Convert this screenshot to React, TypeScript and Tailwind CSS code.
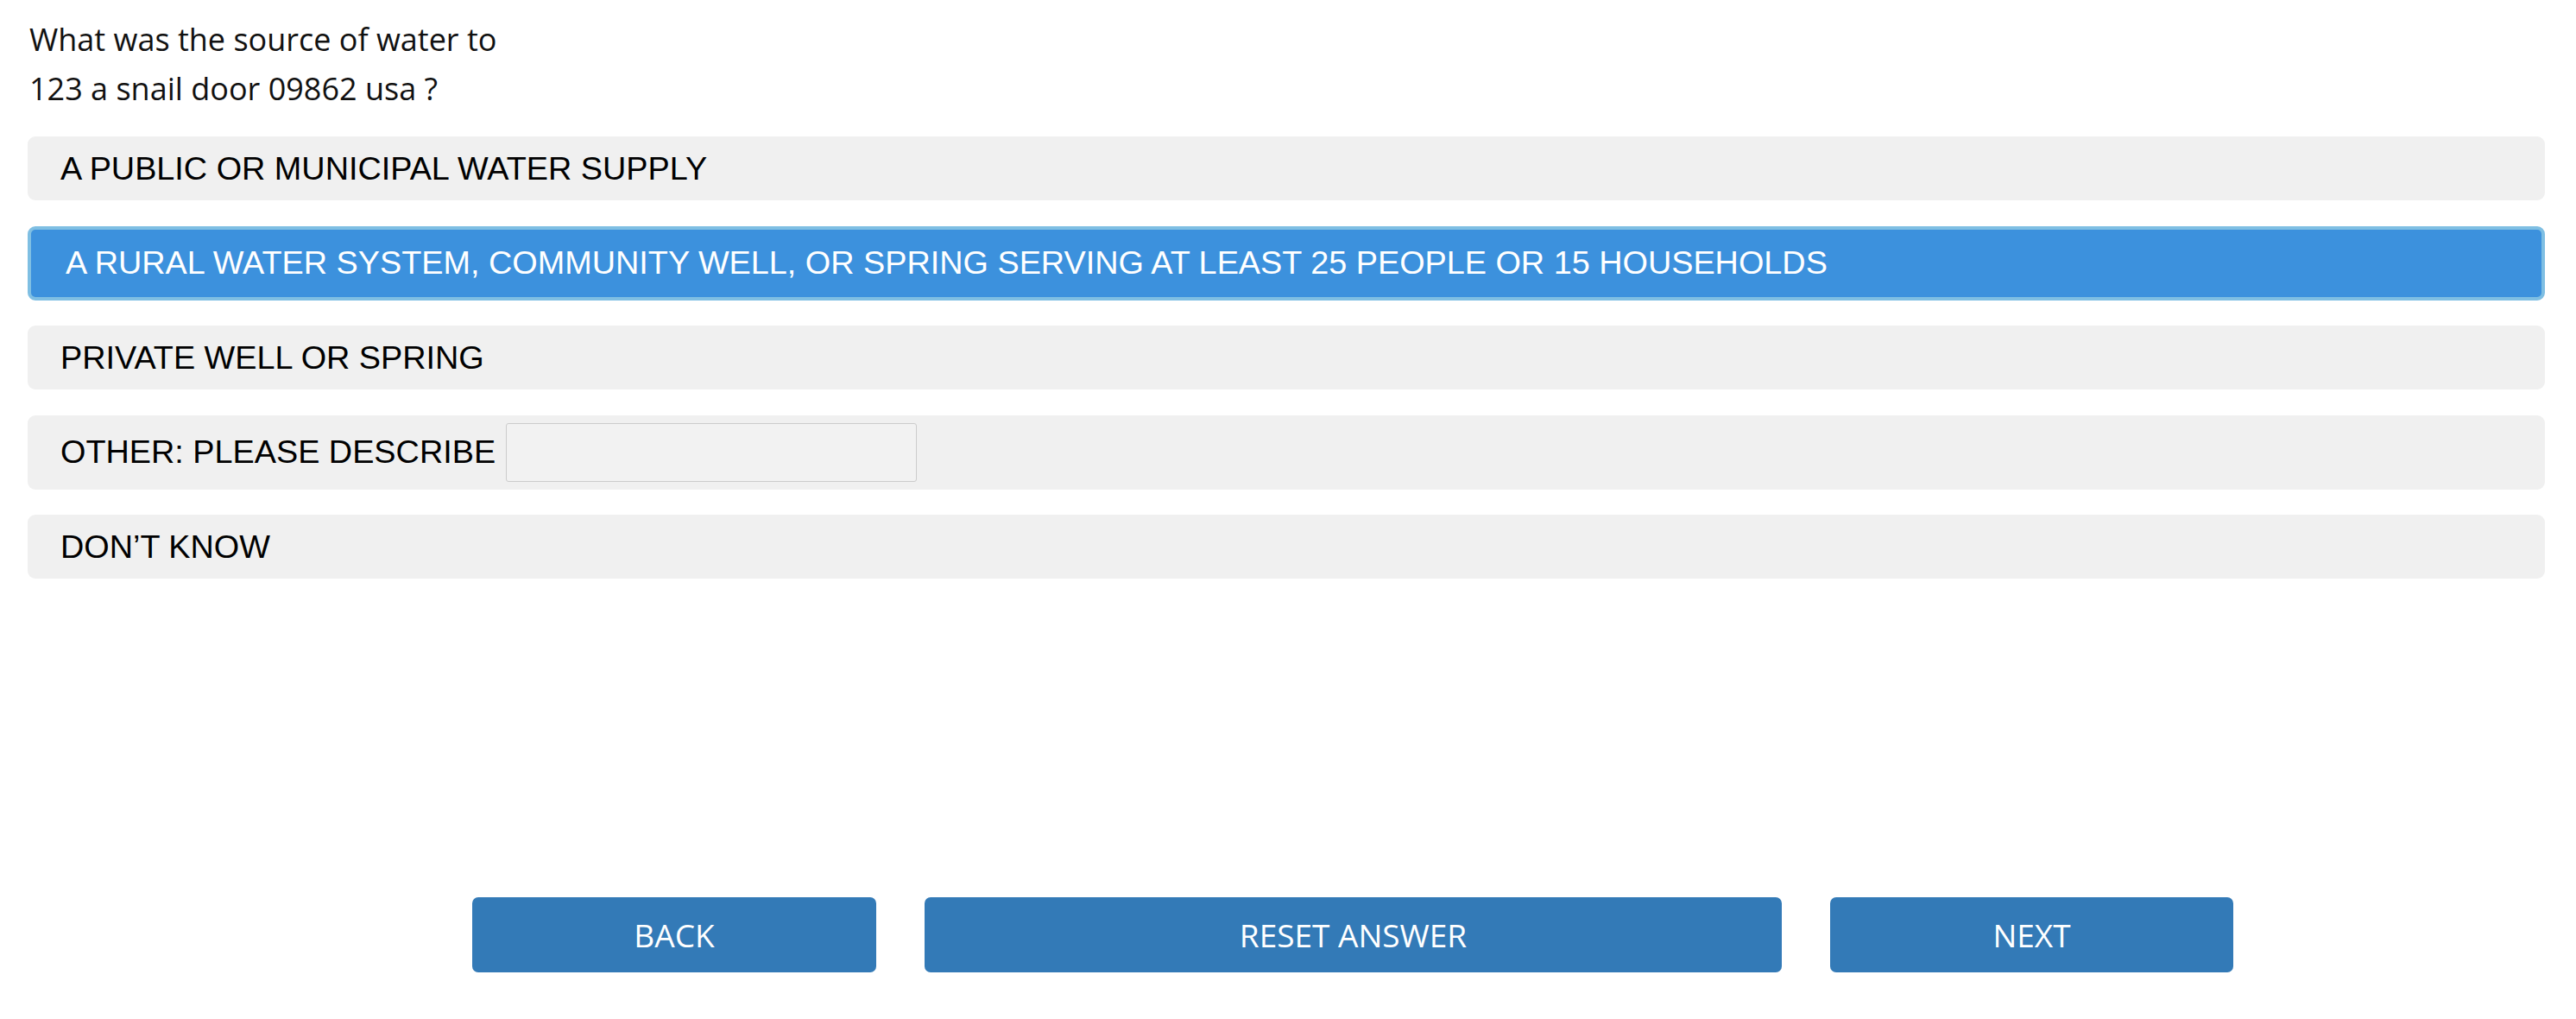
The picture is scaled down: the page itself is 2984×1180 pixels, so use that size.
import React from "react";

const options = [
  { label: "A PUBLIC OR MUNICIPAL WATER SUPPLY", selected: false },
  { label: "A RURAL WATER SYSTEM, COMMUNITY WELL, OR SPRING SERVING AT LEAST 25 PEOPLE OR 15 HOUSEHOLDS", selected: true },
  { label: "PRIVATE WELL OR SPRING", selected: false },
  { label: "OTHER: PLEASE DESCRIBE", selected: false, input: true },
  { label: "DON\u2019T KNOW", selected: false },
];

export default function App() {
  return (
    <div className="w-full h-[1180px] bg-white overflow-hidden">
      <div className="pl-[32px] pr-[36px]">
        <div
          className="pt-[17px] pl-[2px] text-[36px] leading-[57px] text-[#111]"
          style={{ fontFamily: '"Open Sans", sans-serif' }}
        >
          <div>What was the source of water to</div>
          <div>123 a snail door 09862 usa ?</div>
        </div>

        <div className="mt-[27px] flex flex-col gap-[29.5px]" style={{ fontFamily: '"Liberation Sans", Arial, sans-serif' }}>
          {options.map((o) =>
            o.selected ? (
              <div
                key={o.label}
                className="h-[86px] flex items-center rounded-[9px] border-[4px] border-[#7fbfe3] bg-[#3c91dd] pl-[40px] text-white text-[37.8px]"
              >
                {o.label}
              </div>
            ) : (
              <div
                key={o.label}
                className={`${o.input ? "h-[86px]" : "h-[74px]"} flex items-center rounded-[9px] bg-[#f0f0f0] pl-[38px] text-black text-[37.8px]`}
              >
                <span>{o.label}</span>
                {o.input && (
                  <input
                    type="text"
                    className="ml-[12px] w-[476px] h-[68px] bg-[#f2f2f2] border-[1.5px] border-[#cccccc] rounded-[3px] outline-none"
                  />
                )}
              </div>
            )
          )}
        </div>

        <div
          className="mt-[369px] flex pl-[515px] gap-[56px] text-white text-[37px]"
          style={{ fontFamily: '"Open Sans", sans-serif' }}
        >
          <button className="w-[468px] h-[87px] rounded-[7px] bg-[#337ab7] flex items-center justify-center">BACK</button>
          <button className="w-[993px] h-[87px] rounded-[7px] bg-[#337ab7] flex items-center justify-center">RESET ANSWER</button>
          <button className="w-[467px] h-[87px] rounded-[7px] bg-[#337ab7] flex items-center justify-center">NEXT</button>
        </div>
      </div>
    </div>
  );
}
